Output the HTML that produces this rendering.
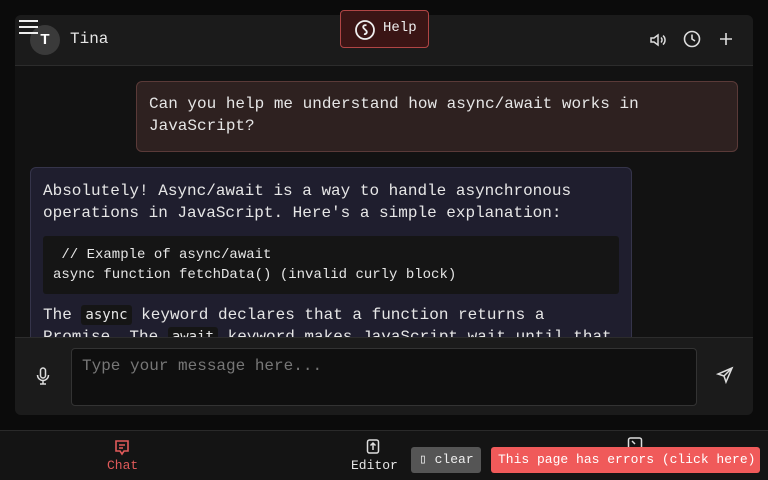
<!DOCTYPE html>
<html><head><style>
*{box-sizing:border-box;margin:0;padding:0}
body{width:768px;height:480px;background:#0b0b0b;font-family:"Liberation Mono",monospace;color:#e6e6e6;position:relative;overflow:hidden}
.panel{position:absolute;left:15px;top:15px;width:738px;height:400px;background:#121212;border-radius:6px;overflow:hidden}
.hdr{position:absolute;left:0;top:0;width:738px;height:51px;background:#1b1b1b;border-bottom:1px solid #2c2c2c}
.av{position:absolute;left:15px;top:10px;width:30px;height:30px;border-radius:50%;background:#3a3a3a;color:#fff;font:bold 15px "Liberation Sans",sans-serif;text-align:center;line-height:30px}
.name{position:absolute;left:55px;top:15px;font-size:16px}
.msg{position:absolute;font-size:16px;line-height:22px;border-radius:6px}
.u{left:121px;top:66px;width:602px;height:71px;background:#2e2120;border:1px solid #5a3a38;padding:11px 12px}
.a{left:15px;top:152px;width:602px;height:200px;background:#1f1e2e;border:1px solid #35344a;padding:12px 12px}
pre{background:#151515;margin:12px 0 10px;padding:9px 10px;font-size:14px;line-height:20px;border-radius:3px;font-family:"Liberation Mono",monospace}
code{background:#151515;font-size:14px;padding:2px 4px;border-radius:3px}
.inp{position:absolute;left:0;top:322px;width:738px;height:78px;background:#1b1b1b;border-top:1px solid #2c2c2c}
.ta{position:absolute;left:56px;top:10px;width:626px;height:58px;background:#0f0f0f;border:1px solid #333;border-radius:4px;padding:8px 10px;color:#777;font-size:16px}
.bar{position:absolute;left:0;top:430px;width:768px;height:50px;background:#141414;border-top:1px solid #2a2a2a}
.help{position:absolute;left:340px;top:10px;width:89px;height:38px;background:#3a1515;border:1px solid #b04545;border-radius:4px;font-size:14px;color:#eee}
</style></head><body>
<div class="panel">
 <div class="hdr">
  <div class="av">T</div><div class="name">Tina</div>
  <svg style="position:absolute;left:633px;top:15px" width="20" height="20" viewBox="0 0 20 20" fill="none" stroke="#ddd" stroke-width="1.5"><path d="M3 8h3l4-3v10l-4-3H3z"/><path d="M13 7.5a3.5 3.5 0 0 1 0 5M15 5.5a6 6 0 0 1 0 9"/></svg>
  <svg style="position:absolute;left:667px;top:14px" width="20" height="20" viewBox="0 0 20 20" fill="none" stroke="#ddd" stroke-width="1.6"><circle cx="10" cy="10" r="7.5"/><path d="M10 5.5V10l3 2"/></svg>
  <svg style="position:absolute;left:701px;top:14px" width="20" height="20" viewBox="0 0 20 20" fill="none" stroke="#ddd" stroke-width="1.6"><path d="M10 4v12M4 10h12"/></svg>
 </div>
 <div class="msg u">Can you help me understand how async/await works in JavaScript?</div>
 <div class="msg a">Absolutely! Async/await is a way to handle asynchronous operations in JavaScript. Here's a simple explanation:
  <pre> // Example of async/await
async function fetchData() (invalid curly block)</pre>
  The <code>async</code> keyword declares that a function returns a Promise. The <code>await</code> keyword makes JavaScript wait until that</div>
 <div class="inp">
  <svg style="position:absolute;left:19px;top:28px" width="18" height="20" viewBox="0 0 18 20" fill="none" stroke="#ddd" stroke-width="1.5"><rect x="6.5" y="2" width="5" height="10" rx="2.5"/><path d="M3.5 9a5.5 5.5 0 0 0 11 0M9 14.5V18M6 18h6"/></svg>
  <div class="ta">Type your message here...</div>
  <svg style="position:absolute;left:700px;top:27px" width="20" height="20" viewBox="0 0 20 20" fill="none" stroke="#ddd" stroke-width="1.5"><path d="M17 3L3 9l6 2 2 6z M9 11l8-8"/></svg>
 </div>
</div>
<div class="help">
 <svg style="position:absolute;left:13px;top:8px" width="22" height="22" viewBox="0 0 22 22" fill="none" stroke="#eee" stroke-width="1.8"><circle cx="11" cy="11" r="9"/><path d="M12.5 6.5c-2-1-4 .5-3 2.5l3 3c1 2-1 3.5-2.5 3"/></svg>
 <span style="position:absolute;left:42px;top:9px;font-size:14px">Help</span>
</div>
<svg style="position:absolute;left:18px;top:18px" width="22" height="18" viewBox="0 0 22 18" stroke="#eee" stroke-width="2"><path d="M1 3h19M1 9h19M1 15h19"/></svg>
<div class="bar">
 <svg style="position:absolute;left:114px;top:8px" width="16" height="17" viewBox="0 0 16 17" fill="none" stroke="#e05a5a" stroke-width="1.6"><path d="M2 2h12v10H10l-2 3-2-3H2z M5 6h6M5 9h4"/></svg>
 <div style="position:absolute;left:107px;top:27px;font-size:13px;color:#e05a5a">Chat</div>
 <svg style="position:absolute;left:365px;top:7px" width="16" height="17" viewBox="0 0 16 17" fill="none" stroke="#ddd" stroke-width="1.5"><rect x="2.5" y="2" width="11" height="13" rx="2"/><path d="M8 12V5M5.5 7.5 8 5l2.5 2.5"/></svg>
 <div style="position:absolute;left:351px;top:27px;font-size:13px">Editor</div>
 <svg style="position:absolute;left:627px;top:6px" width="16" height="12" viewBox="0 0 16 12" fill="none" stroke="#ddd" stroke-width="1.5"><rect x="1.5" y="1" width="13" height="14" rx="2"/><path d="M5 4l3 3"/></svg>
 <div style="position:absolute;left:411px;top:16px;width:70px;height:26px;background:#555;border-radius:3px;font-size:13px;line-height:26px;padding-left:8px;color:#eee">▯ clear</div>
 <div style="position:absolute;left:491px;top:16px;width:269px;height:26px;background:#f05a5a;border-radius:3px;font-size:13px;line-height:26px;padding-left:7px;color:#fff">This page has errors (click here)</div>
</div>
</body></html>
